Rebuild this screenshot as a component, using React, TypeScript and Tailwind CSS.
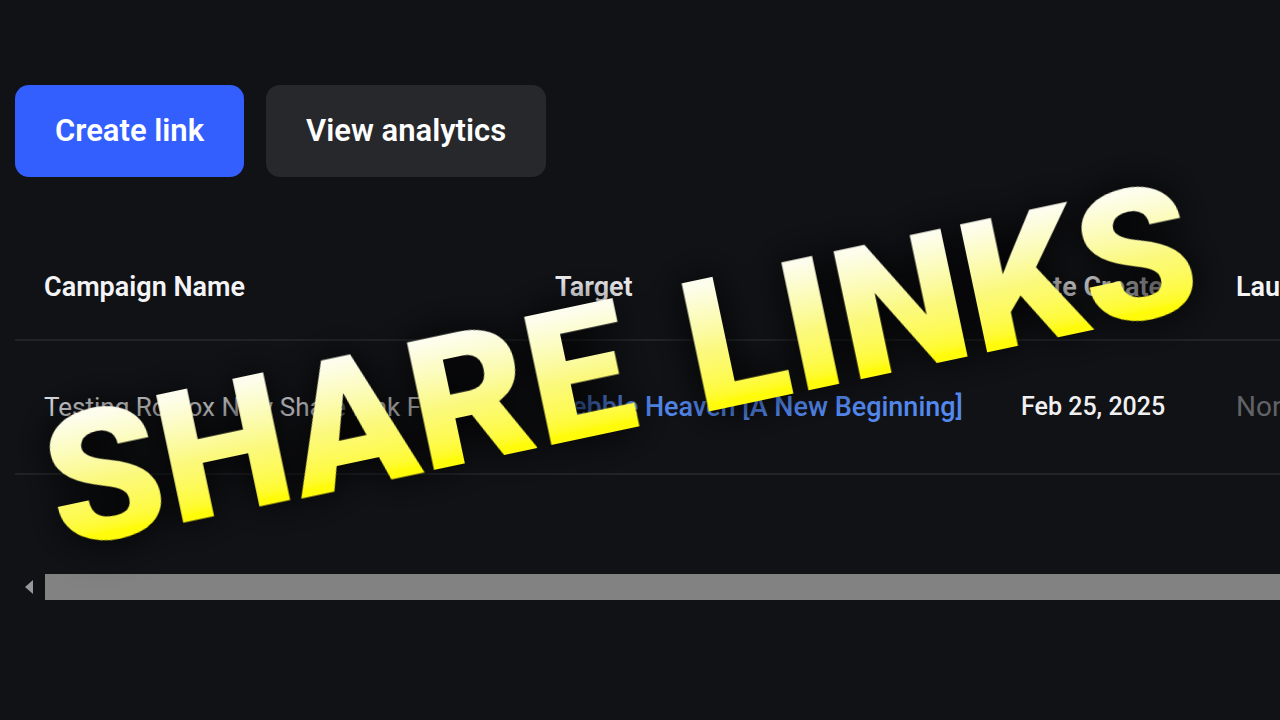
const COLUMNS = [
  { label: "Campaign Name", width: "w-[511px]" },
  { label: "Target", width: "w-[466px]" },
  { label: "Date Created", width: "w-[215px]" },
  { label: "Launch Data", width: "w-[260px]" },
];

const LINKS = [
  {
    name: "Testing Roblox New Share Link F",
    target: "Pebble Heaven [A New Beginning]",
    created: "Feb 25, 2025",
    launchData: "None",
  },
];

const Toolbar = () => (
  <div className="flex gap-[22px] px-[15px]">
    <button type="button" className="h-[92px] rounded-[14px] bg-[#335fff] px-10 text-[31px] font-semibold text-white">
      Create link
    </button>
    <button type="button" className="h-[92px] rounded-[14px] bg-[#27282c] px-10 text-[31px] font-semibold text-white">
      View analytics
    </button>
  </div>
);

const LinksTable = () => (
  <div className="mt-[59px] overflow-hidden pl-[15px]">
    <table className="w-[1452px] table-fixed border-collapse text-left">
      <thead>
        <tr className="h-[104px] border-b-2 border-[#222327]">
          {COLUMNS.map((col) => (
            <th key={col.label} scope="col" className={`${col.width} pl-[29px] text-[27px] font-semibold text-[#f4f4f6]`}>
              {col.label}
            </th>
          ))}
        </tr>
      </thead>
      <tbody>
        {LINKS.map((link) => (
          <tr key={link.name} className="h-[134px] whitespace-nowrap border-b-2 border-[#222327]">
            <td className="pl-[29px] text-[26px] text-[#e2e3e6]">{link.name}</td>
            <td className="pl-[29px]">
              <a href="#target" className="text-[27px] font-medium text-[#5489f0]">
                {link.target}
              </a>
            </td>
            <td className="pl-[29px] text-[25px] font-medium text-[#f0f0f2]">{link.created}</td>
            <td className="pl-[29px] text-[28px] text-[#626367]">{link.launchData}</td>
          </tr>
        ))}
      </tbody>
    </table>
  </div>
);

const Scrollbar = () => (
  <div className="mt-[99px] flex items-center gap-3 pl-[25px]" aria-hidden="true">
    <svg viewBox="0 0 8 14" className="h-[14px] w-2" fill="#96979b">
      <path d="M8 0v14L0 7z" />
    </svg>
    <div className="h-[26px] flex-1 bg-[#828282]" />
  </div>
);

const Banner = () => (
  <div className="pointer-events-none absolute inset-0 flex items-center justify-center pt-3 pr-10">
    <div className="-rotate-12 drop-shadow-[0_0_20px_#000]">
      <h1 className="flex gap-[58px] whitespace-nowrap bg-linear-to-b from-[#fdfdee] from-18% via-[#fbf97c] via-52% to-[#fffb0a] to-78% bg-clip-text text-[184px] leading-[200px] font-black text-transparent">
        <span>SHARE</span> <span>LINKS</span>
      </h1>
    </div>
  </div>
);

export default function App() {
  return (
    <main className="relative min-h-screen overflow-hidden bg-[#111216] pt-[85px] font-['Roboto',sans-serif]">
      <Toolbar />
      <LinksTable />
      <Scrollbar />
      <Banner />
    </main>
  );
}
